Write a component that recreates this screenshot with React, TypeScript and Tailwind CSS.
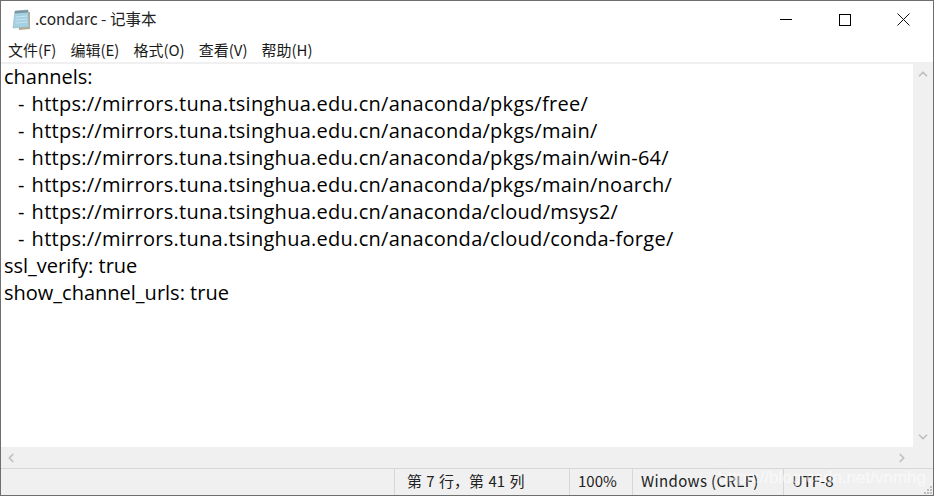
import { ChevronDown, ChevronLeft, ChevronRight, ChevronUp } from "lucide-react";

const lines = [
    "channels:",
    "  - https://mirrors.tuna.tsinghua.edu.cn/anaconda/pkgs/free/",
    "  - https://mirrors.tuna.tsinghua.edu.cn/anaconda/pkgs/main/",
    "  - https://mirrors.tuna.tsinghua.edu.cn/anaconda/pkgs/main/win-64/",
    "  - https://mirrors.tuna.tsinghua.edu.cn/anaconda/pkgs/main/noarch/",
    "  - https://mirrors.tuna.tsinghua.edu.cn/anaconda/cloud/msys2/",
    "  - https://mirrors.tuna.tsinghua.edu.cn/anaconda/cloud/conda-forge/",
    "ssl_verify: true",
    "show_channel_urls: true",
];

const menus = ["文件(F)", "编辑(E)", "格式(O)", "查看(V)", "帮助(H)"];

function NotepadIcon() {
    return (
        <svg width="22" height="22" viewBox="0 0 22 22">
            <path d="M8 4 L20 3 L20 20 L9 21 Z" fill="#b9a98c" />
            <path d="M5 2 L18 1 L19 18 L3 19 Z" fill="#a5d0e2" stroke="#8fb4c4" strokeWidth="0.6" />
            <path d="M5 2 L18 1 L18.2 3.5 L4.8 4.5 Z" fill="#7d95a3" />
            <path d="M6 8 L17 7 M5.7 11 L17.3 10 M5.4 14 L17.5 13" stroke="#c9e5f1" strokeWidth="1" />
        </svg>
    );
}

export default function App() {
    return (
        <div className="relative w-[934px] h-[496px] flex flex-col bg-white border border-[#6e6e6e] overflow-hidden font-['Noto_Sans_CJK_SC','Noto_Sans',sans-serif] text-[#1a1a1a]">
            {/* Title bar */}
            <div className="h-[37px] flex items-center pl-[9px] shrink-0">
                <NotepadIcon />
                <span className="ml-[3px] pb-[2px] text-[15.5px] text-[#222]">.condarc - 记事本</span>
                <div className="ml-auto flex items-center">
                    <div className="w-[59px] flex justify-center">
                        <div className="w-[12px] h-px bg-black" />
                    </div>
                    <div className="w-[59px] flex justify-center">
                        <div className="w-[12px] h-[12px] border border-black" />
                    </div>
                    <div className="w-[59px] flex justify-center">
                        <svg width="13" height="13" viewBox="0 0 13 13">
                            <path d="M0.5 0.5 L12.5 12.5 M12.5 0.5 L0.5 12.5" stroke="#111" strokeWidth="1" />
                        </svg>
                    </div>
                </div>
            </div>

            {/* Menu */}
            <div className="h-[24px] flex items-center pl-[7px] gap-[14px] text-[15px] shrink-0">
                {menus.map((m) => (
                    <span key={m}>{m}</span>
                ))}
            </div>

            {/* Editor */}
            <div className="flex-1 flex min-h-0 border-t-2 border-[#f0f0f0]">
                <div className="flex-1 pl-[3px] -mt-[1px] text-[20px] leading-[27px] whitespace-pre text-black font-['Open_Sans',sans-serif]">
                    {lines.map((l) => (
                        <div key={l} className={l.startsWith("  ") ? "tracking-[0.27px] [word-spacing:1.5px]" : ""}>{l}</div>
                    ))}
                </div>
                <div className="w-[20px] bg-[#f0f0f0] flex flex-col justify-between items-center py-[3px] text-[#c0c0c0]">
                    <ChevronUp size={14} strokeWidth={3} />
                    <ChevronDown size={14} strokeWidth={3} />
                </div>
            </div>

            {/* Horizontal scrollbar */}
            <div className="h-[21px] bg-[#f0f0f0] flex items-center justify-between pl-[3px] pr-[24px] text-[#c0c0c0] shrink-0">
                <ChevronLeft size={14} strokeWidth={3} />
                <ChevronRight size={14} strokeWidth={3} />
            </div>

            {/* Status bar */}
            <div className="h-[27px] bg-[#f0f0f0] border-t border-[#d7d7d7] flex text-[15px] leading-[22px] text-[#222] shrink-0">
                <div className="w-[393px]" />
                <div className="w-[175px] border-l border-[#d7d7d7] pl-[12px] pt-[1px] whitespace-pre [word-spacing:1px]">第 7 行，第 41 列</div>
                <div className="w-[63px] border-l border-[#d7d7d7] pl-[8px] pt-[1px]">100%</div>
                <div className="w-[151px] border-l border-[#d7d7d7] pl-[8px] pt-[1px] tracking-[0.35px]">Windows (CRLF)</div>
                <div className="flex-1 border-l border-[#d7d7d7] pl-[8px] pt-[1px]">UTF-8</div>
            </div>

            {/* Watermark */}
            <span className="absolute right-[7px] bottom-[7px] text-[17px] leading-[20px] text-white/55 font-['Liberation_Sans',sans-serif]">https://blog.csdn.net/vnmhg</span>

            {/* Resize grip */}
            <svg className="absolute right-0 bottom-0" width="9" height="9" viewBox="0 0 9 9" fill="#bdbdbd">
                <rect x="6" y="0" width="2" height="2" />
                <rect x="3" y="3" width="2" height="2" />
                <rect x="6" y="3" width="2" height="2" />
                <rect x="0" y="6" width="2" height="2" />
                <rect x="3" y="6" width="2" height="2" />
                <rect x="6" y="6" width="2" height="2" />
            </svg>
        </div>
    );
}
